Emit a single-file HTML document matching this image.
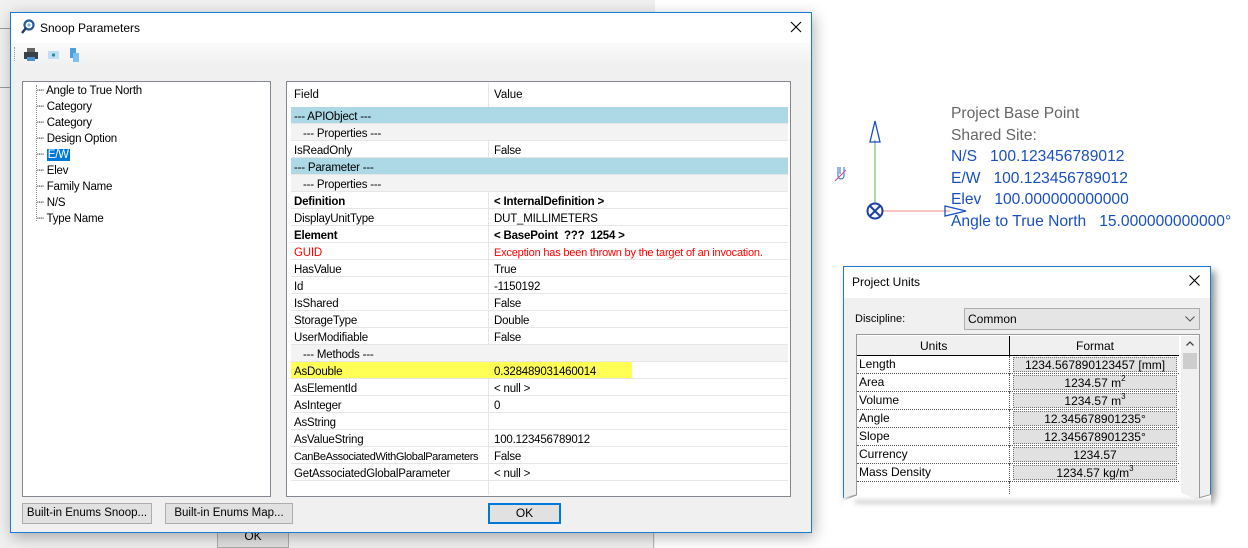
<!DOCTYPE html>
<html><head><style>
*{box-sizing:border-box;margin:0;padding:0}
body{width:1248px;height:548px;position:relative;overflow:hidden;background:#fff;font-family:"Liberation Sans",sans-serif;font-size:12px;color:#000}
.a{position:absolute}
.row{position:absolute;left:291px;width:497px;height:17px;border-bottom:1px solid #e6e6e6;line-height:16px;white-space:nowrap;font-size:11.5px;letter-spacing:-0.2px}
.row span{position:absolute;top:2px}
.f{left:3px}.v{left:203px}
.btn{position:absolute;background:#e1e1e1;border:1px solid #adadad;text-align:center;line-height:18px}
.ur{position:absolute;left:857px;width:322px;height:18px;border-bottom:1px dotted #555;font-size:12px;line-height:17px}
.ur .n{position:absolute;left:2px}
.ur .fm{position:absolute;left:156px;width:164px;top:1px;height:15px;background:#e1e1e1;border:1px dotted #777;text-align:center;line-height:14px}
.ur .d{position:absolute;left:152px;top:0;height:18px;border-left:1px dotted #555}
sup{font-size:8px;vertical-align:6px;line-height:0}
</style></head><body>
<div class="a" style="left:0;top:0;width:655px;height:548px;background:#f0f0f0"></div>
<div class="a" style="left:0;top:28px;width:10px;height:1px;background:#999"></div>
<div class="a" style="left:0;top:87px;width:10px;height:1px;background:#999"></div>
<div class="a" style="left:653px;top:530px;width:1px;height:18px;background:#bbb"></div>
<div class="btn" style="left:217px;top:526px;width:72px;height:22px">OK</div>

<div class="a" style="left:10px;top:12px;width:802px;height:521px;border:1px solid #1a7ad4;background:#f0f0f0;box-shadow:2px 4px 14px rgba(0,0,0,.3)"></div>
<div class="a" style="left:11px;top:13px;width:800px;height:30px;background:#fff"></div>
<svg class="a" style="left:20px;top:19px" width="16" height="16" viewBox="0 0 16 16"><circle cx="9" cy="6" r="4.5" fill="none" stroke="#2a5b96" stroke-width="2.2"/><circle cx="9" cy="6" r="1.6" fill="#79b6e6"/><path d="M6 9L2 14" stroke="#1b3d6a" stroke-width="2.4"/></svg>
<div class="a" style="left:40px;top:21px;font-size:12px">Snoop Parameters</div>
<svg class="a" style="left:790px;top:21px" width="12" height="12"><path d="M1 1L11 11M11 1L1 11" stroke="#000" stroke-width="1.1"/></svg>
<div class="a" style="left:11px;top:43px;width:800px;height:26px;background:linear-gradient(#fafafa,#efefef)"></div>
<div class="a" style="left:14px;top:47px;height:14px;border-left:1px dotted #999"></div>
<svg class="a" style="left:24px;top:48px" width="56" height="14"><rect x="0" y="4" width="14" height="7" fill="#3a3f48"/><rect x="3" y="0" width="8" height="4" fill="#666"/><rect x="3" y="9" width="8" height="4" fill="#4a90d9"/><rect x="24" y="3" width="11" height="8" fill="#bde0f7"/><circle cx="29.5" cy="7" r="1.6" fill="#2a8a9a"/><rect x="46" y="0" width="6" height="10" fill="#4aa0e0"/><rect x="49" y="5" width="6" height="9" fill="#7bc0f0"/></svg>

<div class="a" style="left:22px;top:81px;width:249px;height:416px;background:#fff;border:1px solid #828790"></div>
<div class="a" style="left:36px;top:85px;height:136px;border-left:1px dotted #888"></div>
<div class="a" style="left:37px;top:83px;line-height:16px;width:140px;font-size:11.5px;letter-spacing:-0.2px">
<div>┈ Angle to True North</div><div>┈ Category</div><div>┈ Category</div><div>┈ Design Option</div><div>┈ <span style="background:#0078d7;color:#fff;padding:0 1px">E/W</span></div><div>┈ Elev</div><div>┈ Family Name</div><div>┈ N/S</div><div>┈ Type Name</div>
</div>

<div class="a" style="left:286px;top:81px;width:505px;height:416px;background:#fff;border:1px solid #828790"></div>
<div class="a" style="left:488px;top:83px;width:1px;height:412px;background:#e6e6e6"></div>
<div class="a" style="left:294px;top:89px;font-size:11.5px">Field</div><div class="a" style="left:494px;top:89px;font-size:11.5px">Value</div>
<div class="row" style="top:107px;background:#add8e6"><span class="f">--- APIObject ---</span></div>
<div class="row" style="top:124px;background:#f3f3f3"><span class="f">&nbsp;&nbsp;&nbsp;--- Properties ---</span></div>
<div class="row" style="top:141px"><span class="f">IsReadOnly</span><span class="v">False</span></div>
<div class="row" style="top:158px;background:#add8e6"><span class="f">--- Parameter ---</span></div>
<div class="row" style="top:175px;background:#f3f3f3"><span class="f">&nbsp;&nbsp;&nbsp;--- Properties ---</span></div>
<div class="row" style="top:192px;font-weight:bold"><span class="f">Definition</span><span class="v">&lt; InternalDefinition &gt;</span></div>
<div class="row" style="top:209px"><span class="f">DisplayUnitType</span><span class="v">DUT_MILLIMETERS</span></div>
<div class="row" style="top:226px;font-weight:bold"><span class="f">Element</span><span class="v">&lt; BasePoint &nbsp;??? &nbsp;1254 &gt;</span></div>
<div class="row" style="top:243px;color:#f00"><span class="f">GUID</span><span class="v" style="font-size:11px">Exception has been thrown by the target of an invocation.</span></div>
<div class="row" style="top:260px"><span class="f">HasValue</span><span class="v">True</span></div>
<div class="row" style="top:277px"><span class="f">Id</span><span class="v">-1150192</span></div>
<div class="row" style="top:294px"><span class="f">IsShared</span><span class="v">False</span></div>
<div class="row" style="top:311px"><span class="f">StorageType</span><span class="v">Double</span></div>
<div class="row" style="top:328px"><span class="f">UserModifiable</span><span class="v">False</span></div>
<div class="row" style="top:345px;background:#f3f3f3"><span class="f">&nbsp;&nbsp;&nbsp;--- Methods ---</span></div>
<div class="row" style="top:362px"><div class="a" style="left:0;top:0;width:341px;height:16px;background:#ffff55"></div><span class="f">AsDouble</span><span class="v">0.328489031460014</span></div>
<div class="row" style="top:379px"><span class="f">AsElementId</span><span class="v">&lt; null &gt;</span></div>
<div class="row" style="top:396px"><span class="f">AsInteger</span><span class="v">0</span></div>
<div class="row" style="top:413px"><span class="f">AsString</span><span class="v"></span></div>
<div class="row" style="top:430px"><span class="f">AsValueString</span><span class="v">100.123456789012</span></div>
<div class="row" style="top:447px"><span class="f" style="font-size:11px;letter-spacing:-0.4px">CanBeAssociatedWithGlobalParameters</span><span class="v">False</span></div>
<div class="row" style="top:464px"><span class="f">GetAssociatedGlobalParameter</span><span class="v">&lt; null &gt;</span></div>

<div class="btn" style="left:22px;top:503px;width:130px;height:21px;font-size:11.5px">Built-in Enums Snoop...</div>
<div class="btn" style="left:165px;top:503px;width:128px;height:21px;font-size:11.5px">Built-in Enums Map...</div>
<div class="btn" style="left:488px;top:503px;width:73px;height:21px;border:2px solid #0078d7;line-height:16px">OK</div>

<svg class="a" style="left:830px;top:110px" width="150" height="120">
<line x1="45" y1="30" x2="45" y2="93" stroke="#5ab04a"/>
<line x1="53" y1="101" x2="120" y2="101" stroke="#f08a8a"/>
<path d="M45 11L40 32H50Z" fill="none" stroke="#1a4fc0" stroke-width="1.3"/>
<path d="M115 96L136 101L115 106Z" fill="none" stroke="#1a4fc0" stroke-width="1.3"/>
<circle cx="45" cy="101" r="7.5" fill="none" stroke="#1a3fa8" stroke-width="2"/>
<path d="M40 96L50 106M50 96L40 106" stroke="#1a3fa8" stroke-width="2"/>
<path d="M8 57v9a3 3 0 0 0 6 0v-9M10 57v7" fill="none" stroke="#2a70c0"/><line x1="5" y1="71" x2="16" y2="60" stroke="#e040a0"/>
</svg>
<div class="a" style="left:951px;top:103px;font-size:15.6px;line-height:21.5px;color:#1a4fc0;white-space:pre"><span style="color:#666">Project Base Point
Shared Site:</span>
N/S   100.123456789012
E/W   100.123456789012
Elev   100.000000000000
Angle to True North   15.000000000000°</div>

<div class="a" style="left:843px;top:266px;width:368px;height:238px;filter:drop-shadow(4px 5px 4px rgba(0,0,0,.45))">
<div style="width:368px;height:238px;background:#f0f0f0;border:1px solid #1a7ad4;border-bottom:none;clip-path:polygon(0 0,100% 0,100% 228px,96% 232px,92% 226px,88% 233px,84% 228px,80% 234px,76% 227px,72% 232px,68% 225px,64% 233px,60% 229px,56% 235px,52% 227px,48% 232px,44% 226px,40% 234px,36% 228px,32% 233px,28% 227px,24% 235px,20% 228px,16% 232px,12% 225px,8% 233px,4% 228px,0 232px)">
<div style="height:31px;background:#fff"></div>
</div></div>
<div class="a" style="left:852px;top:275px;font-size:12px">Project Units</div>
<svg class="a" style="left:1189px;top:275px" width="11" height="11"><path d="M0.5 0.5L10.5 10.5M10.5 0.5L0.5 10.5" stroke="#000" stroke-width="1.1"/></svg>
<div class="a" style="left:855px;top:313px;font-size:11px">Discipline:</div>
<div class="a" style="left:964px;top:308px;width:236px;height:22px;background:#e5e5e5;border:1px solid #adadad;line-height:20px;padding-left:3px;font-size:12px">Common</div>
<svg class="a" style="left:1185px;top:316px" width="10" height="6"><path d="M0.5 0.5L5 5L9.5 0.5" fill="none" stroke="#555"/></svg>
<div class="a" style="left:856px;top:334px;width:344px;height:170px;background:#fff;border:1px solid #999"></div>
<div class="a" style="left:857px;top:336px;width:322px;height:20px;background:#f0f0f0;border-bottom:1px solid #000"></div>
<div class="a" style="left:1009px;top:336px;width:1px;height:20px;background:#000"></div>
<div class="a" style="left:920px;top:339px">Units</div><div class="a" style="left:1076px;top:339px">Format</div>
<div class="a" style="left:1181px;top:336px;width:18px;height:168px;background:#f0f0f0"></div>
<div class="a" style="left:1183px;top:353px;width:14px;height:16px;background:#cdcdcd"></div>
<svg class="a" style="left:1186px;top:341px" width="8" height="5"><path d="M0.5 4.5L4 1L7.5 4.5" fill="none" stroke="#444" stroke-width="1.3"/></svg>
<div class="ur" style="top:356px"><span class="n">Length</span><span class="d"></span><span class="fm">1234.567890123457 [mm]</span></div>
<div class="ur" style="top:374px"><span class="n">Area</span><span class="d"></span><span class="fm">1234.57 m<sup>2</sup></span></div>
<div class="ur" style="top:392px"><span class="n">Volume</span><span class="d"></span><span class="fm">1234.57 m<sup>3</sup></span></div>
<div class="ur" style="top:410px"><span class="n">Angle</span><span class="d"></span><span class="fm">12.345678901235°</span></div>
<div class="ur" style="top:428px"><span class="n">Slope</span><span class="d"></span><span class="fm">12.345678901235°</span></div>
<div class="ur" style="top:446px"><span class="n">Currency</span><span class="d"></span><span class="fm">1234.57</span></div>
<div class="ur" style="top:464px"><span class="n">Mass Density</span><span class="d"></span><span class="fm">1234.57 kg/m<sup>3</sup></span></div>
<div class="a" style="left:1009px;top:482px;height:20px;border-left:1px dotted #555"></div>
<div class="a" style="left:843px;top:493px;width:368px;height:55px;background:#fff;clip-path:polygon(0 8px,4% 2px,8% 7px,12% 0,16% 6px,20% 2px,24% 9px,28% 1px,32% 7px,36% 2px,40% 8px,44% 0,48% 6px,52% 1px,56% 9px,60% 3px,64% 7px,68% 0,72% 6px,76% 1px,80% 8px,84% 2px,88% 7px,92% 0,96% 6px,100% 2px,100% 100%,0 100%)"></div>
<div class="a" style="left:855px;top:500px;width:360px;height:6px;background:linear-gradient(rgba(0,0,0,.25),rgba(0,0,0,0));filter:blur(2px)"></div>
</body></html>
